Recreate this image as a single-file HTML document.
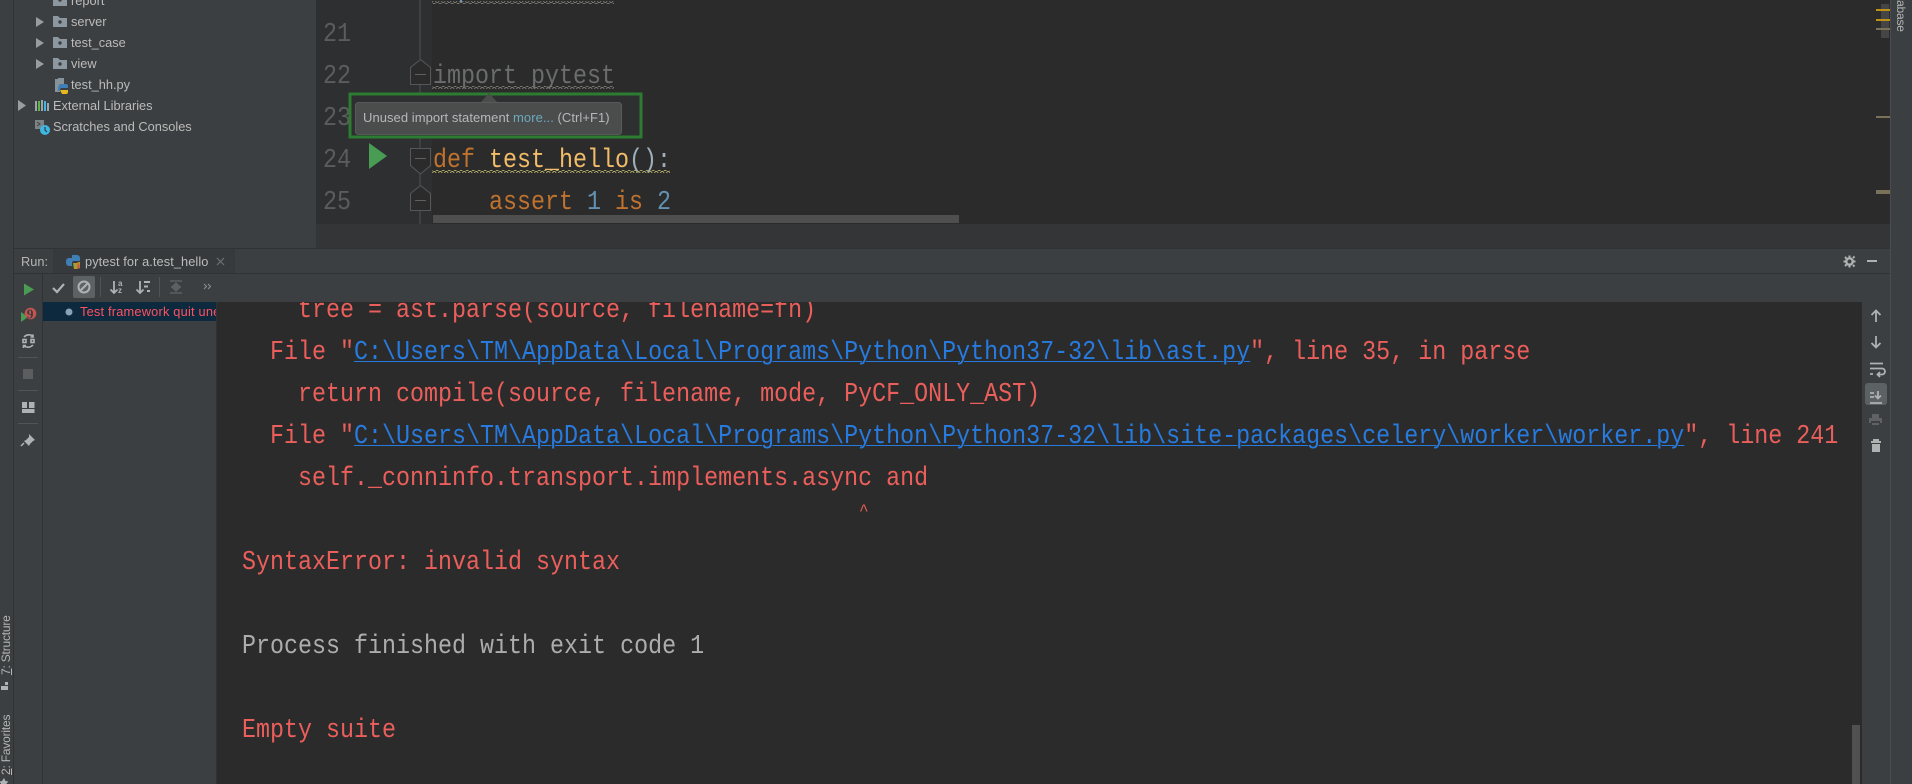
<!DOCTYPE html>
<html><head><meta charset="utf-8"><title>PyCharm</title>
<style>
html,body{margin:0;padding:0;background:#3c3f41;}
#p{position:relative;width:1912px;height:784px;overflow:hidden;background:#3c3f41;font-family:"Liberation Sans",sans-serif;}
.b{position:absolute;}
.t{position:absolute;white-space:pre;font-size:12.8px;color:#bbbbbb;line-height:18px;font-family:"Liberation Sans",sans-serif;}
.c{position:absolute;white-space:pre;font-family:"Liberation Mono",monospace;font-size:27px;line-height:42px;height:42px;transform:translateY(1px) scaleX(.8642);transform-origin:0 0;}
.e{margin-top:1px}
.r{color:#ea5f5b}.g{color:#adadad}
u{color:#287bde;text-decoration:underline;text-underline-offset:2px;text-decoration-thickness:1px}
svg{position:absolute;left:0;top:0;}
.v{position:absolute;white-space:pre;font-size:12px;letter-spacing:-.2px;color:#b4b4b4;line-height:14px;transform-origin:0 0;}
</style></head><body><div id="p">
<!-- backgrounds -->
<div class="b" style="left:13px;top:0;width:1px;height:784px;background:#323232"></div>
<div class="b" style="left:316px;top:0;width:1574px;height:224px;background:#2b2b2b"></div>
<div class="b" style="left:316px;top:0;width:116px;height:224px;background:#2e2f30"></div>
<div class="b" style="left:316px;top:224px;width:1574px;height:24px;background:#333537"></div>
<div class="b" style="left:14px;top:224px;width:302px;height:24px;background:#3c3f41"></div>
<div class="b" style="left:14px;top:248px;width:1876px;height:1px;background:#323232"></div>
<div class="b" style="left:53px;top:249px;width:182px;height:24px;background:#373a3c"></div>
<div class="b" style="left:14px;top:273px;width:1876px;height:1px;background:#323232"></div>
<div class="b" style="left:42px;top:274px;width:1px;height:510px;background:#323232"></div>
<div class="b" style="left:217px;top:302px;width:1645px;height:482px;background:#2b2b2b"></div>
<div class="b" style="left:216px;top:302px;width:1px;height:482px;background:#323232"></div>
<div class="b" style="left:43px;top:302px;width:173px;height:19px;background:#0d293e"></div>
<div class="b" style="left:1890px;top:0;width:1px;height:784px;background:#4a4c4e"></div>
<div class="b" style="left:1852px;top:725px;width:8px;height:59px;background:#4f5051"></div>
<div class="b" style="left:433px;top:215px;width:526px;height:8px;background:#4f4f4f"></div>
<div class="b" style="left:1881px;top:4px;width:8px;height:34px;background:#454545"></div>
<div class="b" style="left:1876px;top:9px;width:14px;height:2px;background:#be9117"></div>
<div class="b" style="left:1876px;top:19px;width:14px;height:2px;background:#be9117"></div>
<div class="b" style="left:1876px;top:28px;width:14px;height:2px;background:#7a7258"></div>
<div class="b" style="left:1876px;top:116px;width:14px;height:2px;background:#7a7258"></div>
<div class="b" style="left:1876px;top:190px;width:14px;height:4px;background:#7a7258"></div>
<div class="b" style="left:73px;top:276px;width:22px;height:22px;border-radius:2px;background:#5c6164"></div>
<div class="b" style="left:1865px;top:383px;width:22px;height:22px;border-radius:3px;background:#5c6164"></div>

<!-- project tree -->
<div class="t" style="left:71px;top:-8px">report</div>
<div class="t" style="left:71px;top:13px">server</div>
<div class="t" style="left:71px;top:34px">test_case</div>
<div class="t" style="left:71px;top:55px">view</div>
<div class="t" style="left:71px;top:76px">test_hh.py</div>
<div class="t" style="left:53px;top:97px">External Libraries</div>
<div class="t" style="left:53px;top:118px">Scratches and Consoles</div>

<!-- editor text -->
<div class="c e" style="left:323px;top:12px;color:#5a5c5d">21</div>
<div class="c e" style="left:323px;top:54px;color:#5a5c5d">22</div>
<div class="c e" style="left:323px;top:138px;color:#5a5c5d">24</div>
<div class="c e" style="left:323px;top:180px;color:#5a5c5d">25</div>
<div class="c e" style="left:433px;top:54px;color:#6a6c6d">import pytest</div>
<div class="c e" style="left:433px;top:138px;color:#c0722f">def <span style="color:#f2bc68">test_hello</span><span style="color:#a0adbb">():</span></div>
<div class="c e" style="left:433px;top:180px;color:#c0722f">    assert <span style="color:#6391b2">1</span> is <span style="color:#6391b2">2</span></div>

<!-- run header -->
<div class="t" style="left:21px;top:253px;color:#b4b4b4">Run:</div>
<div class="t" style="left:85px;top:253px;letter-spacing:.08px">pytest for a.test_hello</div>
<div class="b" style="left:43px;top:302px;width:173px;height:19px;overflow:hidden"><div class="t" style="left:37px;top:1px;color:#ff5261;letter-spacing:.2px">Test framework quit unexpectedly</div></div>

<!-- console -->
<div class="b" style="left:217px;top:302px;width:1645px;height:482px;overflow:hidden">
<div class="c r" style="left:81px;top:-13px">tree = ast.parse(source, filename=fn)</div>
<div class="c r" style="left:53px;top:29px">File "<u>C:\Users\TM\AppData\Local\Programs\Python\Python37-32\lib\ast.py</u>", line 35, in parse</div>
<div class="c r" style="left:81px;top:71px">return compile(source, filename, mode, PyCF_ONLY_AST)</div>
<div class="c r" style="left:53px;top:113px">File "<u>C:\Users\TM\AppData\Local\Programs\Python\Python37-32\lib\site-packages\celery\worker\worker.py</u>", line 241</div>
<div class="c r" style="left:81px;top:155px">self._conninfo.transport.implements.async and</div>
<div class="c r" style="left:642px;top:188px;font-size:16px;transform:none">^</div>
<div class="c r" style="left:25px;top:239px">SyntaxError: invalid syntax</div>
<div class="c g" style="left:25px;top:323px">Process finished with exit code 1</div>
<div class="c r" style="left:25px;top:407px">Empty suite</div>
</div>

<!-- side labels -->
<div class="v" style="left:-1px;top:675px;transform:rotate(-90deg)"><span style="text-decoration:underline">7</span>: Structure</div>
<div class="v" style="left:-1px;top:775px;transform:rotate(-90deg)"><span style="text-decoration:underline">2</span>: Favorites</div>
<div class="v" style="left:1908px;top:-18px;transform:rotate(90deg)">Database</div>

<svg width="1912" height="784" viewBox="0 0 1912 784" xmlns="http://www.w3.org/2000/svg">
<defs>
<pattern id="w1" x="0" y="0" width="6" height="3" patternUnits="userSpaceOnUse"><path d="M0 2.5 L1.5 .5 L3 .5 L4.5 2.5 L6 2.5" fill="none" stroke="#77776f" stroke-width="1"/></pattern>
<pattern id="w2" x="0" y="0" width="6" height="3" patternUnits="userSpaceOnUse"><path d="M0 2.5 L1.5 .5 L3 .5 L4.5 2.5 L6 2.5" fill="none" stroke="#aaa564" stroke-width="1"/></pattern>
</defs>
<!-- tree folders -->
<g fill="#9aa7b0" opacity=".85">
<path d="M53-6h5l2 2h7v9H53z" transform="translate(0 1)"/>
<path d="M53 16h5l2 2h7v9H53z"/><path d="M53 37h5l2 2h7v9H53z"/><path d="M53 58h5l2 2h7v9H53z"/>
</g>
<g fill="#3c3f41"><circle cx="60" cy="22" r="1.7"/><circle cx="60" cy="43" r="1.7"/><circle cx="60" cy="64" r="1.7"/><circle cx="60" cy="0" r="1.7"/></g>
<g fill="#9a9c9e"><path d="M36 17l8 5-8 5z"/><path d="M36 38l8 5-8 5z"/><path d="M36 59l8 5-8 5z"/><path d="M18 100l8 5.500-8 5.500z"/></g>
<path d="M55 79h5v13h-5z M58 78h6v6h-6z" fill="#9aa7b0" opacity=".8"/>
<path d="M61 84h5a2 2 0 0 1 2 2v2h-6a2 2 0 0 0-2 2v1h-2v-3a4 4 0 0 1 3-4z" fill="#3f7fb5"/>
<path d="M60 90h8v2a2 2 0 0 1-2 2h-4z" fill="#e8b81f"/>
<g><rect x="35" y="101" width="2" height="10" fill="#9aa7b0"/><rect x="38" y="101" width="2" height="10" fill="#62b543"/><rect x="41" y="100" width="2" height="11" fill="#9aa7b0"/><rect x="44" y="101" width="2" height="10" fill="#40b6e0"/><rect x="47" y="103" width="2" height="8" fill="#9aa7b0"/></g>
<rect x="35" y="120" width="9" height="9" fill="#7c8487"/><path d="M37 122l3 2-3 2" fill="none" stroke="#3c3f41"/>
<circle cx="45" cy="130" r="5" fill="#40b6e0"/><path d="M45 127v3l2 2" fill="none" stroke="#23424f" stroke-width="1.200"/>

<!-- editor gutter -->
<path d="M420 0V59M420 85V148M420 174V185M420 211V224" stroke="#4f5052" fill="none"/>
<g fill="#2b2b2b" stroke="#555759" stroke-width="1">
<path d="M420.500 59.500l10 8v17h-20v-17z"/>
<path d="M410.500 148.500h20v17l-10 8.500-10-8.500z"/>
<path d="M420.500 185.500l10 8v17h-20v-17z"/>
</g>
<path d="M415 74.500h11M415 158.500h11M415 200.500h11" stroke="#5e6062"/>
<path d="M369 143l18 13-18 13z" fill="#499c54"/>
<rect x="432" y="1" width="182" height="3" fill="url(#w1)"/>
<rect x="432" y="86" width="182" height="3" fill="url(#w1)"/>
<rect x="432" y="170" width="238" height="3" fill="url(#w2)"/>
<rect x="460" y="0" width="2" height="2" fill="#6897bb"/>

<!-- green highlight + tooltip -->
<rect x="350" y="94" width="291" height="43" fill="#2e2f30" stroke="#2c7c31" stroke-width="3"/>
<path d="M481 102l8-9 8 9z" fill="#4b4d4d"/>
<rect x="355.500" y="102.500" width="266" height="32" rx="3" fill="#4b4d4d" stroke="#585a5a"/>
<text x="363" y="122" font-family="Liberation Sans" font-size="13" letter-spacing=".05" fill="#b4b8ba" xml:space="preserve">Unused import statement <tspan fill="#6aa9bd">more...</tspan> (Ctrl+F1)</text>

<!-- run tab icon -->
<path d="M72 255h5a3 3 0 0 1 3 3v3h-6a2 2 0 0 0-2 2v3h-3a3 3 0 0 1-3-3v-2a3 3 0 0 1 3-3h3z" fill="#3f7fb5"/>
<path d="M73 263h4l1-1h2v6l-3 1h-3z" fill="#b8962a"/>
<path d="M78 262l2 5-3 2z" fill="#c75450"/><path d="M75 264l-2 2 2 2z" fill="#62b543"/>
<path d="M217 258l7 7m0-7l-7 7" stroke="#6e7072" stroke-width="1.200"/>
<!-- gear/minimize -->
<circle cx="1849.500" cy="261.500" r="3.200" fill="none" stroke="#afb1b3" stroke-width="2.400"/>
<path d="M1849.500 255.500v2M1849.500 265.500v2M1843.500 261.500h2M1853.500 261.500h2M1845 257l1.500 1.500M1853 265l1.500 1.500M1845 266l1.500-1.500M1853 258l1.500-1.500" stroke="#afb1b3" stroke-width="2"/>
<rect x="1867" y="260" width="10" height="2" fill="#afb1b3"/>

<!-- left run toolbar -->
<path d="M24 283.500l10 6-10 6z" fill="#499c54"/>
<path d="M21 312l7 5-7 5z" fill="#499c54"/>
<circle cx="30.500" cy="313.500" r="5.800" fill="#c75450"/><text x="26.800" y="318.500" font-family="Liberation Serif" font-weight="bold" font-size="13.500" fill="#3c3f41">9</text>
<g fill="none" stroke="#afb1b3" stroke-width="1.600"><path d="M24 337a7 7 0 0 1 9-1M33 334.500v2.500h-2.500"/><path d="M33 345a7 7 0 0 1-9 1M23.500 348v-2.500h2.500"/><rect x="23" y="339.500" width="3" height="3"/><rect x="31" y="339.500" width="3" height="3"/></g>
<rect x="18" y="357" width="20" height="1" fill="#515354"/>
<rect x="23" y="369" width="10" height="10" fill="#5b5d5e"/>
<rect x="18" y="390" width="20" height="1" fill="#515354"/>
<path d="M22 402h5v6h-5zM29 402h5.500v6H29zM22 409h12.500v4H22z" fill="#afb1b3"/>
<rect x="18" y="423" width="20" height="1" fill="#515354"/>
<path d="M29 434l6 6-2 1-3 3-1 2-5-5 2-1 3-3z" fill="#afb1b3"/><path d="M24 443l-3 3" stroke="#afb1b3" stroke-width="1.500"/>

<!-- top run toolbar -->
<path d="M53 288l4 4 7-8" fill="none" stroke="#afb1b3" stroke-width="2.200"/>
<circle cx="84" cy="287" r="5.500" fill="none" stroke="#afb1b3" stroke-width="2"/><path d="M80 291l8-8" stroke="#afb1b3" stroke-width="2"/>
<rect x="100" y="277" width="1" height="20" fill="#515354"/>
<path d="M114 281v12M110.500 289.500l3.500 3.500 3.500-3.500" fill="none" stroke="#afb1b3" stroke-width="1.800"/>
<text x="118" y="286" font-family="Liberation Sans" font-weight="bold" font-size="8" fill="#afb1b3">a</text><text x="118" y="293" font-family="Liberation Sans" font-weight="bold" font-size="8" fill="#afb1b3">z</text>
<path d="M140 281v12M136.500 289.500l3.500 3.500 3.500-3.500" fill="none" stroke="#afb1b3" stroke-width="1.800"/>
<path d="M144 281h6v2h-6zM144 285.500h4v2h-4zM147 290h3v2h-3z" fill="#afb1b3"/>
<rect x="159" y="277" width="1" height="20" fill="#515354"/>
<path d="M170 281h12M170 293h12M176 283l-3 3h6zM176 291l-3-3h6zM171 287h10" stroke="#5d5f60" stroke-width="1.500" fill="#5d5f60"/>
<path d="M204 284l2.500 2.500-2.500 2.500M208 284l2.500 2.500-2.500 2.500" fill="none" stroke="#8f9193" stroke-width="1"/>
<circle cx="69" cy="312" r="3.500" fill="#8ba2b5"/>

<!-- right toolbar -->
<g fill="none" stroke="#afb1b3" stroke-width="1.800">
<path d="M1876 322v-11M1871.500 315l4.500-4.500 4.500 4.500"/>
<path d="M1876 336v11M1871.500 343l4.500 4.500 4.500-4.500"/>
<path d="M1870 363.500h13M1870 368.500h12a2.500 2.500 0 0 1 0 6h-4M1880 372l-2.500 2.500 2.500 2.500M1870 374h3"/>
<path d="M1870 403h12M1878 391v7M1875 395.500l3 3 3-3M1870 393h4M1870 397h4"/>
</g>
<path d="M1872 414h7v4h-7zM1869 418h13v5h-2v-2h-9v2h-2zM1872 423h7v2h-7z" fill="#5f6162"/>
<path d="M1873 439h6v2h-6zM1871 441h10v2h-10zM1872 444h8v8h-8z" fill="#afb1b3"/>

<!-- left strip icons -->
<rect x="1" y="686" width="4" height="4" fill="#afb1b3"/><rect x="5" y="682" width="3" height="3" fill="#afb1b3"/><rect x="5" y="686" width="3" height="4" fill="#afb1b3"/>
<path d="M4 778l1.500 3 3 .5-2 2 .5 3H0.500l.5-3-2-2 3-.5z" fill="#afb1b3"/>
</svg>
<div class="b" style="left:323px;top:96px;width:26px;height:42px;overflow:hidden"><div class="c e" style="left:0;top:0;color:#5a5c5d">23</div></div>
</div></body></html>
